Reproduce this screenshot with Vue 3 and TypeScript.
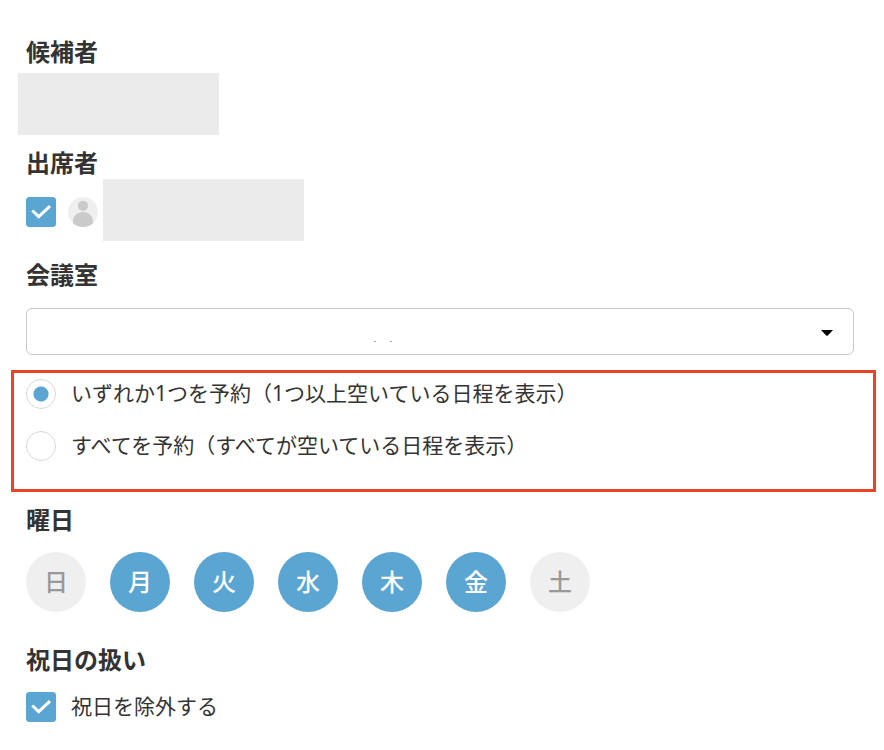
<script setup lang="ts">
import { ref } from 'vue'

interface Day {
  label: string
  active: boolean
}

const attendeeChecked = ref(true)
const room = ref('')
const roomMode = ref<'any' | 'all'>('any')
const excludeHolidays = ref(true)

const days = ref<Day[]>([
  { label: '日', active: false },
  { label: '月', active: true },
  { label: '火', active: true },
  { label: '水', active: true },
  { label: '木', active: true },
  { label: '金', active: true },
  { label: '土', active: false },
])
</script>

<template>
  <main class="page">
    <section class="section">
      <h2 class="heading">候補者</h2>
      <div class="block candidate"></div>
    </section>

    <section class="section attendees">
      <h2 id="attendees" class="heading">出席者</h2>
      <div class="attendee-row">
        <div class="attendee-controls">
          <span class="check">
            <input v-model="attendeeChecked" type="checkbox" aria-labelledby="attendees" />
            <svg v-if="attendeeChecked" viewBox="0 0 30 30" aria-hidden="true">
              <path d="M6.300 13.500L12.700 19.600L24 9.200" />
            </svg>
          </span>
          <svg class="avatar" viewBox="0 0 30 30" aria-hidden="true">
            <circle cx="15" cy="15" r="15" fill="#efefef" />
            <circle cx="15" cy="8.900" r="5" fill="#cacaca" />
            <path d="M5 26.200V24.500C5 19 9.300 15 15 15S25 19 25 24.500V26.200C22.400 28.600 18.900 30 15 30S7.600 28.600 5 26.200Z" fill="#cacaca" />
          </svg>
        </div>
        <div class="block"></div>
      </div>
    </section>

    <section class="section rooms">
      <label class="heading" for="room">会議室</label>
      <div class="select">
        <select id="room" v-model="room">
          <option value=""></option>
        </select>
        <span class="specks" aria-hidden="true"><i></i><i></i></span>
        <svg class="arrow" viewBox="0 0 12 6" aria-hidden="true"><path d="M0 0H12L6.800 5.500Q6 6.200 5.200 5.500Z" /></svg>
      </div>
    </section>

    <div class="highlight">
      <label class="option">
        <input v-model="roomMode" type="radio" name="room-mode" value="any" />
        <span class="option-text">いずれか1つを予約（1つ以上空いている日程を表示）</span>
      </label>
      <label class="option">
        <input v-model="roomMode" type="radio" name="room-mode" value="all" />
        <span class="option-text">すべてを予約（すべてが空いている日程を表示）</span>
      </label>
    </div>

    <section class="section weekdays">
      <h2 class="heading">曜日</h2>
      <div class="days">
        <button
          v-for="day in days"
          :key="day.label"
          type="button"
          class="day"
          :class="{ active: day.active }"
          :aria-pressed="day.active"
          @click="day.active = !day.active"
        >
          {{ day.label }}
        </button>
      </div>
    </section>

    <section class="section holidays">
      <h2 class="heading">祝日の扱い</h2>
      <label class="option">
        <span class="check">
          <input v-model="excludeHolidays" type="checkbox" />
          <svg v-if="excludeHolidays" viewBox="0 0 30 30" aria-hidden="true">
            <path d="M6.300 13.500L12.700 19.600L24 9.200" />
          </svg>
        </span>
        <span class="option-text">祝日を除外する</span>
      </label>
    </section>
  </main>
</template>

<style>
body {
  margin: 0;
  background: #fff;
}
</style>

<style scoped>
.page {
  box-sizing: border-box;
  padding: 35px 8px 28px 11px;
  color: #333;
  font-family: 'Noto Sans', 'Noto Sans CJK JP', sans-serif;
  font-size: 21px;
  line-height: 30px;
}

.section {
  padding: 0 22px 0 15px;
}

.heading {
  display: block;
  margin: 0;
  font-family: 'Noto Sans CJK JP', sans-serif;
  font-size: 24px;
  font-weight: 700;
  line-height: 32px;
}

.block {
  width: 201px;
  height: 62px;
  background: #ebebeb;
}

.candidate {
  margin: 6px 0 0 -8px;
}

.attendees {
  margin-top: 11px;
}

.attendee-row {
  display: flex;
  align-items: center;
  gap: 5px;
  margin-top: 1px;
}

.attendee-controls {
  display: flex;
  gap: 12px;
  padding-top: 4px;
}

.avatar {
  width: 30px;
  height: 30px;
}

.check {
  display: grid;
  flex: none;
  width: 30px;
  height: 30px;
}

.check > * {
  grid-area: 1 / 1;
}

.check input {
  appearance: none;
  width: 30px;
  height: 30px;
  margin: 0;
  border: 1px solid #d8d8d8;
  border-radius: 3px;
  background: #fff;
}

.check input:checked {
  border-color: #5ba5d2;
  background: #5ba5d2;
}

.check svg {
  width: 30px;
  height: 30px;
  fill: none;
  stroke: #fff;
  stroke-width: 3;
  pointer-events: none;
}

.rooms {
  margin-top: 17px;
}

.select {
  position: relative;
  margin-top: 18px;
}

.select select {
  display: block;
  appearance: none;
  width: 100%;
  height: 47px;
  padding: 0 40px 0 16px;
  border: 1px solid #c8c8c8;
  border-radius: 6px;
  background: #fff;
  color: inherit;
  font: inherit;
}

.arrow {
  position: absolute;
  top: 22px;
  right: 21px;
  width: 12px;
  height: 6px;
  fill: #000;
  pointer-events: none;
}

.specks {
  position: absolute;
  top: 33px;
  left: 348px;
  display: flex;
  gap: 14px;
  pointer-events: none;
}

.specks i {
  width: 2px;
  height: 1px;
  background: #aaa;
}

.highlight {
  display: flex;
  flex-direction: column;
  gap: 22px;
  margin-top: 15px;
  padding: 6px 12px 28px;
  border: 3px solid #ec4327;
}

.option {
  display: flex;
  align-items: center;
  gap: 15px;
}

.option-text {
  line-height: 28px;
  padding-bottom: 2px;
}

.option input[type='radio'] {
  appearance: none;
  box-sizing: border-box;
  flex: none;
  width: 30px;
  height: 30px;
  margin: 0;
  border: 1px solid #d8d8d8;
  border-radius: 50%;
  background: #fff;
}

.option input[type='radio']:checked {
  background: radial-gradient(circle, #5ba5d2 7px, #fff 8px);
}

.weekdays {
  margin-top: 11px;
}

.days {
  display: flex;
  flex-wrap: wrap;
  gap: 24px;
  margin-top: 17px;
}

.day {
  width: 60px;
  height: 60px;
  padding: 0 0 2px;
  border: 0;
  border-radius: 50%;
  background: #efefef;
  color: #999;
  font-family: 'Noto Sans CJK JP', sans-serif;
  font-size: 24px;
  font-weight: 500;
  line-height: 58px;
}

.day.active {
  background: #5ba5d2;
  color: #fff;
}

.holidays {
  margin-top: 31px;
}

.holidays .option {
  margin-top: 17px;
}
</style>
